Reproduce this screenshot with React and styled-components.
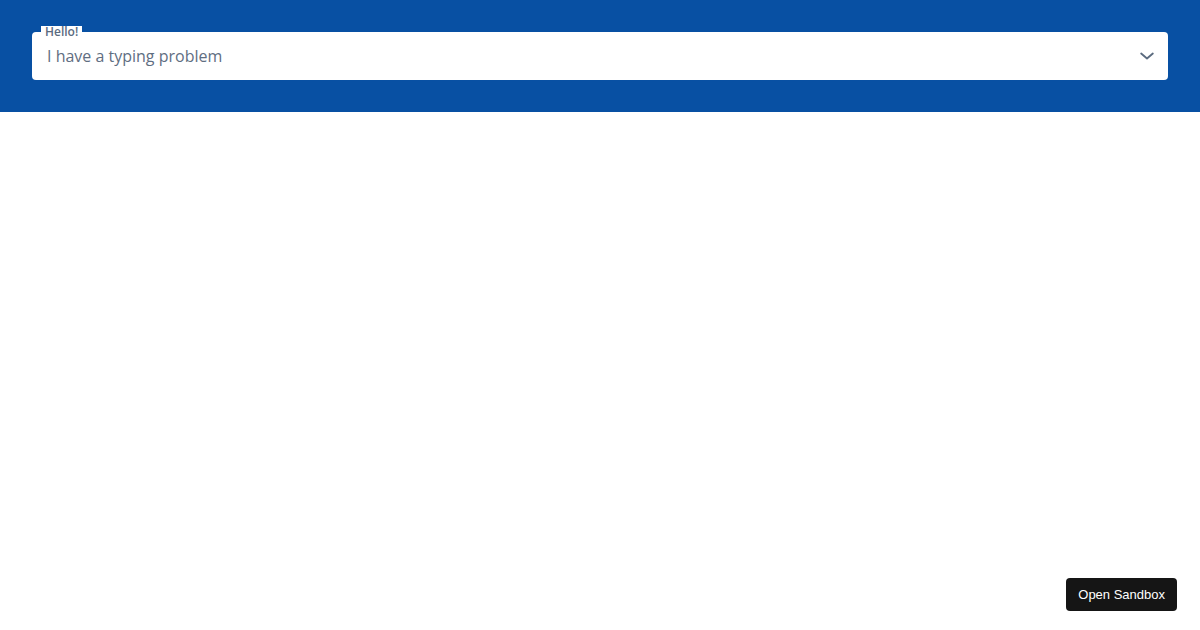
import React from 'react'
import styled, { createGlobalStyle } from 'styled-components'

const GlobalStyle = createGlobalStyle`
  html, body {
    margin: 0;
    padding: 0;
    background: #ffffff;
    font-family: 'Open Sans', 'Noto Sans', sans-serif;
  }
`

const Page = styled.div`
  position: relative;
  width: 100%;
  height: 630px;
`

const Header = styled.header`
  background-color: #0850a3;
  padding: 32px;
  height: 112px;
  box-sizing: border-box;
`

const Field = styled.div`
  position: relative;
`

const Label = styled.span`
  position: absolute;
  left: 9px;
  top: -6px;
  padding: 0 4px;
  background: #ffffff;
  color: #5b6b7f;
  font-size: 12px;
  font-weight: 600;
  line-height: 12px;
`

const Select = styled.div`
  display: flex;
  align-items: center;
  justify-content: space-between;
  height: 48px;
  box-sizing: border-box;
  padding: 0 11px 0 15px;
  background: #ffffff;
  border-radius: 4px;
  color: #5f6e82;
  font-size: 16px;
`

const Chevron = styled.svg`
  width: 20px;
  height: 20px;
  color: #5b6b7f;
`

const SandboxButton = styled.button`
  position: absolute;
  right: 23px;
  bottom: 19px;
  height: 33px;
  padding: 0 12px;
  background: #151515;
  color: #ffffff;
  border: none;
  border-radius: 4px;
  font-family: 'Liberation Sans', Arial, sans-serif;
  font-size: 13px;
`

export default function App() {
  return (
    <Page>
      <GlobalStyle />
      <Header>
        <Field>
          <Label>Hello!</Label>
          <Select>
            <span>I have a typing problem</span>
            <Chevron viewBox="0 0 24 24" fill="none" stroke="currentColor" strokeWidth="2.2" strokeLinecap="round" strokeLinejoin="round">
              <path d="M5 9l7 6 7-6" />
            </Chevron>
          </Select>
        </Field>
      </Header>
      <SandboxButton>Open Sandbox</SandboxButton>
    </Page>
  )
}
